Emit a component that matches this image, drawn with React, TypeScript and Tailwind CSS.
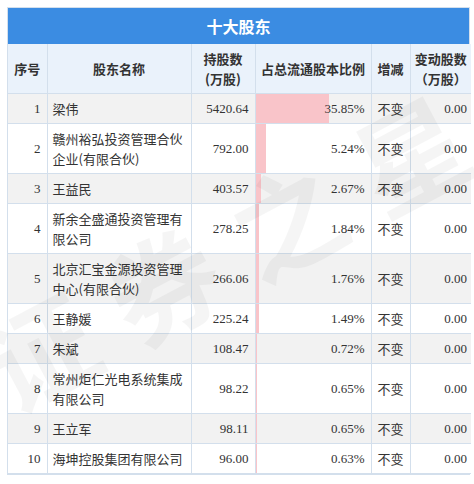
import React from "react"

interface Holder {
  no: number
  name: string
  shares: string
  pct: number
  change: string
  delta: string
}

const holders: Holder[] = [
  { no: 1, name: "梁伟", shares: "5420.64", pct: 35.85, change: "不变", delta: "0.00" },
  { no: 2, name: "赣州裕弘投资管理合伙企业(有限合伙)", shares: "792.00", pct: 5.24, change: "不变", delta: "0.00" },
  { no: 3, name: "王益民", shares: "403.57", pct: 2.67, change: "不变", delta: "0.00" },
  { no: 4, name: "新余全盛通投资管理有限公司", shares: "278.25", pct: 1.84, change: "不变", delta: "0.00" },
  { no: 5, name: "北京汇宝金源投资管理中心(有限合伙)", shares: "266.06", pct: 1.76, change: "不变", delta: "0.00" },
  { no: 6, name: "王静媛", shares: "225.24", pct: 1.49, change: "不变", delta: "0.00" },
  { no: 7, name: "朱斌", shares: "108.47", pct: 0.72, change: "不变", delta: "0.00" },
  { no: 8, name: "常州炬仁光电系统集成有限公司", shares: "98.22", pct: 0.65, change: "不变", delta: "0.00" },
  { no: 9, name: "王立军", shares: "98.11", pct: 0.65, change: "不变", delta: "0.00" },
  { no: 10, name: "海坤控股集团有限公司", shares: "96.00", pct: 0.63, change: "不变", delta: "0.00" },
]

const sans = "font-['Noto_Sans_CJK_SC',sans-serif]"
const serif = "font-['Liberation_Serif','Noto_Sans_CJK_SC',serif]"

export default function App() {
  return (
    <div className="relative w-[474px] h-[484px] bg-white overflow-hidden">
      <div className="pt-[7px] pl-[7px]">
        <div className="w-[463px] border border-[#d3dfec]">
          <div className={`h-[36px] bg-[#3b8ce2] text-white text-[16px] font-bold flex items-center justify-center ${sans}`}>
            十大股东
          </div>
          <table className="w-full table-fixed border-collapse text-[13px] leading-[20px] text-[#333]">
            <colgroup>
              <col className="w-[39px]" />
              <col className="w-[144px]" />
              <col className="w-[64px]" />
              <col className="w-[116px]" />
              <col className="w-[39px]" />
              <col className="w-[61px]" />
            </colgroup>
            <thead>
              <tr className={`bg-[#eaf2fb] font-bold text-center ${sans}`}>
                <th className="border border-[#d3dfec] border-t-0 border-l-0 py-[4.5px]">序号</th>
                <th className="border border-[#d3dfec] border-t-0 py-[4.5px]">股东名称</th>
                <th className="border border-[#d3dfec] border-t-0 py-[4.5px]">
                  持股数
                  <br />
                  (万股)
                </th>
                <th className="border border-[#d3dfec] border-t-0 py-[4.5px]">占总流通股本比例</th>
                <th className="border border-[#d3dfec] border-t-0 py-[4.5px]">增减</th>
                <th className="border border-[#d3dfec] border-t-0 border-r-0 py-[4.5px]">
                  变动股数
                  <br />
                  （万股）
                </th>
              </tr>
            </thead>
            <tbody>
              {holders.map((h) => (
                <tr key={h.no} className={h.no % 2 === 1 ? "bg-[#f2f2f2]" : "bg-white"}>
                  <td className={`border border-[#d3dfec] border-l-0 py-[4.5px] pr-[6px] text-right ${serif}`}>{h.no}</td>
                  <td className={`border border-[#d3dfec] py-[4.5px] px-[5px] text-left ${sans}`}>{h.name}</td>
                  <td className={`border border-[#d3dfec] py-[4.5px] pr-[6px] text-right ${serif}`}>{h.shares}</td>
                  <td className={`relative border border-[#d3dfec] py-[4.5px] pr-[6px] text-right ${serif}`}>
                    <div
                      className="absolute left-0 top-0 bottom-0 bg-[#f9c4c9]"
                      style={{ width: `${h.pct * 2.04}px` }}
                    />
                    <span className="relative">{h.pct.toFixed(2)}%</span>
                  </td>
                  <td className={`border border-[#d3dfec] py-[4.5px] pl-[6px] text-left ${sans}`}>{h.change}</td>
                  <td className={`border border-[#d3dfec] border-r-0 py-[4.5px] pr-[4px] text-right ${serif}`}>{h.delta}</td>
                </tr>
              ))}
            </tbody>
          </table>
        </div>
      </div>

      {/* faint watermark */}
      <div className="pointer-events-none absolute inset-0 flex items-center justify-center">
        <div
          className={`-rotate-[28deg] text-[110px] font-bold tracking-[30px] text-black/[0.04] whitespace-nowrap ${sans}`}
        >
          证券之星
        </div>
      </div>
    </div>
  )
}
